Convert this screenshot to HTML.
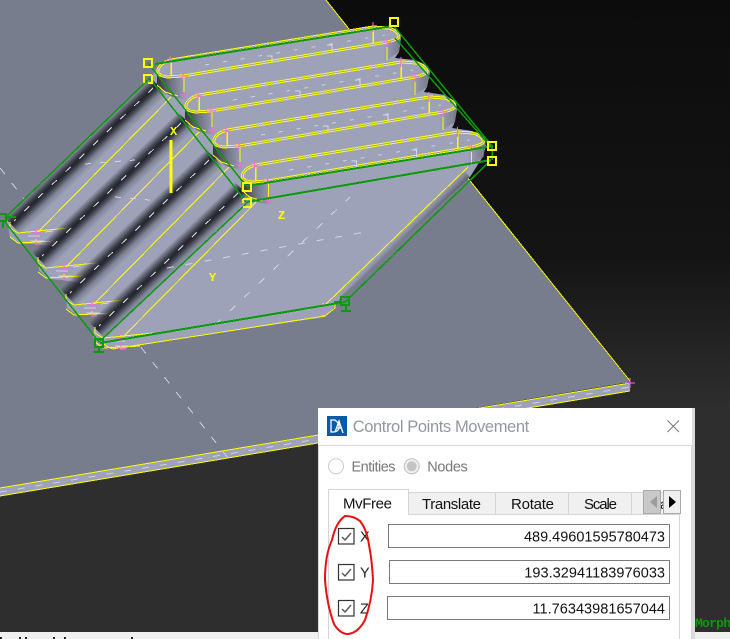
<!DOCTYPE html>
<html><head><meta charset="utf-8"><style>html,body{margin:0;padding:0;background:#2e2e2e;overflow:hidden}svg{display:block}text{font-family:"Liberation Sans",sans-serif}</style></head><body>
<svg xmlns="http://www.w3.org/2000/svg" width="730" height="639" viewBox="0 0 730 639">
<defs>
<linearGradient id="bg" x1="0" y1="0" x2="0" y2="1"><stop offset="0" stop-color="#0c0c0c"/><stop offset=".4" stop-color="#141414"/><stop offset=".64" stop-color="#2e2e2e"/></linearGradient>
<linearGradient id="sg" gradientUnits="userSpaceOnUse" x1="77.1" y1="146.8" x2="95" y2="165.5"><stop offset="0" stop-color="#23242c" stop-opacity="0"/><stop offset=".28" stop-color="#23242c" stop-opacity=".8"/><stop offset=".4" stop-color="#23242c"/><stop offset=".5" stop-color="#23242c" stop-opacity=".85"/><stop offset=".72" stop-color="#23242c" stop-opacity=".25"/><stop offset=".95" stop-color="#23242c" stop-opacity="0"/></linearGradient>
<linearGradient id="wl" gradientUnits="userSpaceOnUse" x1="157" y1="0" x2="187" y2="0"><stop offset="0" stop-color="#33343e"/><stop offset=".5" stop-color="#737688"/><stop offset="1" stop-color="#9da2b8"/></linearGradient>
<linearGradient id="wr" gradientUnits="userSpaceOnUse" x1="383" y1="0" x2="401" y2="0"><stop offset="0" stop-color="#9da2b8"/><stop offset="1" stop-color="#767989"/></linearGradient>
<linearGradient id="eb" gradientUnits="userSpaceOnUse" x1="397" y1="237" x2="405" y2="245"><stop offset="0" stop-color="#50535f" stop-opacity="0"/><stop offset="1" stop-color="#484b56"/></linearGradient>
<g id="stripe">
<polygon points="150,77 168,95.5 22,235.5 4,217" fill="url(#sg)"/>
<line x1="153" y1="88" x2="14" y2="221" stroke="#dfe2f2" stroke-width="1" stroke-dasharray="7 12" shape-rendering="crispEdges"/>
<g shape-rendering="crispEdges">
<path d="M38,232 L180,88" stroke="#ffff00" stroke-width="1" fill="none"/>
<path d="M10,222 L10,228 L18,233 L68,228 M10,237 L18,243 L55,241 M36,233 V243" stroke="#ffff00" stroke-width="1" fill="none"/>
<path d="M36,227 V239 M31,233 H42 M36,241 V245 M36,244 H41" stroke="#ff66e6" stroke-width="1" fill="none"/>
<path d="M28,236 H40 M45,232 l8,-1 M30,241 H44" stroke="#cfd3e6" stroke-width="1" fill="none"/>
</g></g>
<g id="slot">
<polygon points="157,72 172,78 185,76 187,100 172,97 157,87" fill="url(#wl)"/>
<polygon points="383,44 401,37 399,52 383,62" fill="url(#wr)"/>
<g shape-rendering="crispEdges">
<path d="M157,85 L165,92 L178,96" stroke="#ffff00" stroke-width="1" fill="none"/>
<path d="M184,77 V95 M387,43 V60" stroke="#ffff00" stroke-width="1" fill="none"/>
<path d="M171,62 V76 H183" stroke="#ffff00" stroke-width="1.5" fill="none"/>
<path d="M373,28 V43 H387" stroke="#ffff00" stroke-width="1.5" fill="none"/>
<path d="M158,70 Q160,63 171,60 L373,27 L388,28 Q397,30 399,36 Q400,39 387,42 L183,76 L168,77 Q157,76 158,70 Z" stroke="#ffff00" stroke-width="3" fill="none"/>
<path d="M158,70 Q160,63 171,60 L373,27 L388,28 Q397,30 399,36 Q400,39 387,42 L183,76 L168,77 Q157,76 158,70 Z" stroke="#9da2b8" stroke-width="1" fill="none"/>
<path d="M170,56 V65 M166,61 H175 M183,71 V81 M178,76 H188 M184,92 V99 M180,95 H188 M373,22 V32 M387,37 V47 M383,42 H391" stroke="#ff66e6" stroke-width="1" fill="none"/>
<path d="M205,65 L385,35" stroke="#cfd3e6" stroke-width="1" stroke-dasharray="4 14" fill="none"/>
<path d="M272,62 V56 H267 M332,52 V45 H327" stroke="#d6d9ea" stroke-width="1" fill="none"/>
</g></g>
</defs>
<rect width="730" height="639" fill="url(#bg)"/>
<rect x="0" y="632" width="730" height="7" fill="#f0f0f0"/>
<rect x="0" y="637" width="2" height="2" fill="#223"/><rect x="19" y="637" width="2" height="2" fill="#223"/><rect x="25" y="637" width="2" height="2" fill="#223"/><rect x="53" y="637" width="2" height="2" fill="#223"/><rect x="64" y="637" width="2" height="2" fill="#223"/><rect x="131" y="637" width="2" height="2" fill="#223"/>
<polygon points="326,0 630,382 0,488 0,0" fill="#777d8c"/>
<polygon points="630,383 630,391 0,496 0,488" fill="#9da2b8"/>
<g shape-rendering="crispEdges">
<path d="M0,488 L630,383 M0,496 L630,391 M326,0 L349,29 M467,177 L630,381" stroke="#ffff00" stroke-width="1" fill="none"/>
<path d="M0,492 L630,387" stroke="#ced2e6" stroke-width="1" stroke-dasharray="7 11" fill="none"/>
<path d="M625,383 H635 M630,378 V388" stroke="#ff66e6" stroke-width="1" fill="none"/>
<path d="M0,168 L228,458" stroke="#cdd0e4" stroke-width="1" stroke-dasharray="8 11" fill="none"/>
</g>
<polygon points="157,68 170,60 373,27 395,29 401,38 399,52 395,58 415,60 428,66 430,72 427,87 424,92 445,95 456,102 457,110 454,124 452,128 472,131 484,137 486,146 482,158 470,177 340,298 335,306 325,317 112,349 96,345 93,336 94,327 108,315 90,315 75,314 67,308 66,295 80,283 62,280 48,279 39,270 38,258 52,246 35,244 20,244 10,237 8,225 5,218 151,78" fill="#9da2b8"/>
<polygon points="462,169 470,177 340,298 332,291" fill="url(#eb)"/>
<use href="#stripe"/><use href="#stripe" x="28" y="35"/><use href="#stripe" x="56" y="72"/><use href="#stripe" x="85" y="105"/>
<use href="#slot"/><use href="#slot" x="28" y="35"/><use href="#slot" x="56" y="70"/><use href="#slot" x="84.5" y="105"/>
<g shape-rendering="crispEdges">
<path d="M325,305 L468,167" stroke="#ffff00" stroke-width="1" fill="none"/>
<path d="M215,325 L350,197" stroke="#d2d5e8" stroke-width="1" stroke-dasharray="8 12" fill="none"/>
<path d="M167,268 L365,232" stroke="#d2d5e8" stroke-width="1" stroke-dasharray="7 12" fill="none"/>
<path d="M85,164 L135,160 M115,197 L150,200" stroke="#d2d5e8" stroke-width="1" stroke-dasharray="6 9" fill="none"/>
<path d="M113,349 L325,316 L335,308 L335,303 M100,341 L108,347 L113,349" stroke="#ffff00" stroke-width="1" fill="none"/>
<path d="M121,335 V349 M323,303 V316" stroke="#ffff00" stroke-width="1" fill="none"/>
<path d="M121,337 V347 M116,348 H126 M323,305 V315" stroke="#ff66e6" stroke-width="1" fill="none"/>
<path d="M125,338 L320,307" stroke="#cfd3e6" stroke-width="1" stroke-dasharray="6 9" fill="none"/>
<path d="M155,64 L393,26 M247,186 L493,146 M247,202 L491,160 M100,343 L345,302" stroke="#0b9a0b" stroke-width="2" fill="none"/>
<path d="M148,63 L247,187 M150,79 L247,203 M150,78 L5,218 M5,222 L99,342 M99,342 L247,203 M393,25 L492,146 M395,38 L492,148 M491,160 L345,302 M492,146 L492,160" stroke="#0b9a0b" stroke-width="1.5" fill="none"/>
<g fill="none" stroke="#ffff00" stroke-width="2"><rect x="144" y="59" width="8" height="8"/><path d="M152,75 H144 V83 M152,75 V83 H148"/><rect x="243" y="183" width="8" height="8"/><path d="M243,199 H251 V207 H243 M243,199 V203"/><rect x="390" y="18" width="8" height="8"/><rect x="488" y="142" width="8" height="8"/><rect x="488" y="157" width="8" height="8"/></g>
<g fill="none" stroke="#0b9a0b" stroke-width="2"><rect x="-1" y="214" width="7" height="7"/><path d="M3,221 V228 M6,217 H16"/><rect x="95" y="339" width="8" height="8"/><path d="M99,347 V352 M94,352 H104"/><rect x="341" y="297" width="8" height="8"/><path d="M346,305 V311 M341,311 H351 M334,302 H341"/></g>
<path d="M171,140 V193" stroke="#ffff00" stroke-width="3" fill="none"/>
</g>
<text x="170" y="135" font-size="12" font-weight="bold" fill="#ffff00" style="font-family:'Liberation Mono',monospace">X</text>
<text x="278" y="219" font-size="12" font-weight="bold" fill="#ffff00" style="font-family:'Liberation Mono',monospace">Z</text>
<text x="209" y="281" font-size="12" font-weight="bold" fill="#ffff00" style="font-family:'Liberation Mono',monospace">Y</text>
<text x="695" y="627" font-size="13" font-weight="bold" fill="#0a9a0a" textLength="36" style="font-family:'Liberation Mono',monospace">Morph</text>

<rect x="318" y="408" width="377" height="231" fill="#fff"/>
<rect x="692" y="408" width="3" height="231" fill="#dcdcdc"/>
<path d="M318.5,639 V445.5 H691.5 V639" fill="none" stroke="#d8d8d8"/>
<rect x="327" y="416" width="20" height="20" fill="#0b5aa6"/>
<path d="M331,420 H335 Q340,424 339,428 Q338,432 333,432 H331 Z M335,432 L339,421 L343,433 M337,428 H342" fill="none" stroke="#fff" stroke-width="1.3"/>
<text x="352.7" y="432" font-size="16.5" fill="#93979e" textLength="176.5">Control Points Movement</text>
<path d="M667.5,420.5 L679,432 M679,420.5 L667.5,432" stroke="#777" stroke-width="1" fill="none"/>
<circle cx="336" cy="466.3" r="7.5" fill="#fff" stroke="#ccc"/>
<text x="351.5" y="471.7" font-size="14.5" fill="#777" textLength="44">Entities</text>
<circle cx="411.7" cy="466.3" r="7.5" fill="#f0f0f0" stroke="#c0c0c0"/><circle cx="411.7" cy="466.3" r="5" fill="#c4c4c4"/>
<text x="427.3" y="471.7" font-size="14.5" fill="#777" textLength="40.5">Nodes</text>
<rect x="409" y="492.5" width="271" height="21.5" fill="#f0f0f0"/>
<path d="M409,492.5 H680 M495.5,492 V514 M568.5,492 V514 M631.5,492 V514 M328.5,639 V514.5 H680.5 M679.5,514 V639" fill="none" stroke="#d4d4d4"/>
<path d="M328.5,514 V489.5 H408.5 V514" fill="#fff" stroke="#d4d4d4"/>
<rect x="329" y="510" width="79" height="6" fill="#fff"/>
<text x="343" y="508.5" font-size="15" fill="#111" textLength="49">MvFree</text>
<text x="422" y="509" font-size="15" fill="#111" textLength="59">Translate</text>
<text x="511" y="509" font-size="15" fill="#111" textLength="43">Rotate</text>
<text x="584" y="509" font-size="15" fill="#111" textLength="33">Scale</text>
<text x="660" y="509" font-size="14" fill="#111">a</text>
<rect x="643.5" y="490.5" width="17" height="23" fill="#c8c8c8" stroke="#aaa"/>
<polygon points="657,496 650,502 657,508" fill="#9c9c9c"/>
<rect x="663.5" y="490.5" width="17" height="23" fill="#f0f0f0" stroke="#aaa"/>
<polygon points="669,496 676,502 669,508" fill="#000"/>
<g fill="#fff" stroke="#333" stroke-width="1.2"><rect x="338.5" y="528.5" width="15.5" height="15.5"/><rect x="338.5" y="564.5" width="15.5" height="15.5"/><rect x="338.5" y="600.5" width="15.5" height="15.5"/></g>
<path d="M342,537 L345,540 L351,533 M342,573 L345,576 L351,569 M342,609 L345,612 L351,605" fill="none" stroke="#555" stroke-width="1.4"/>
<text x="360" y="541.7" font-size="14.5" fill="#222">X</text>
<text x="360" y="577.5" font-size="14.5" fill="#222">Y</text>
<text x="360" y="613.5" font-size="14.5" fill="#222">Z</text>
<g fill="#fff" stroke="#7a7a7a"><rect x="388.5" y="524.5" width="281" height="23"/><rect x="389.5" y="560.5" width="280" height="23"/><rect x="387.5" y="596.5" width="282" height="23"/></g>
<text x="524" y="541.7" font-size="14.5" fill="#111" textLength="141">489.49601595780473</text>
<text x="524.3" y="577.7" font-size="14.5" fill="#111" textLength="140.7">193.32941183976033</text>
<text x="532.5" y="613.7" font-size="14.5" fill="#111" textLength="132.5">11.76343981657044</text>
<path d="M345,516 Q354,516 360,521 Q367,530 369,545 Q372,560 373,580 Q372,600 365,620 Q358,633 348,634 Q340,634 334,624 Q327,605 325,580 Q325,555 332,540 Q336,522 345,516 Z" fill="none" stroke="#e81010" stroke-width="2"/>
</svg>
</body></html>
